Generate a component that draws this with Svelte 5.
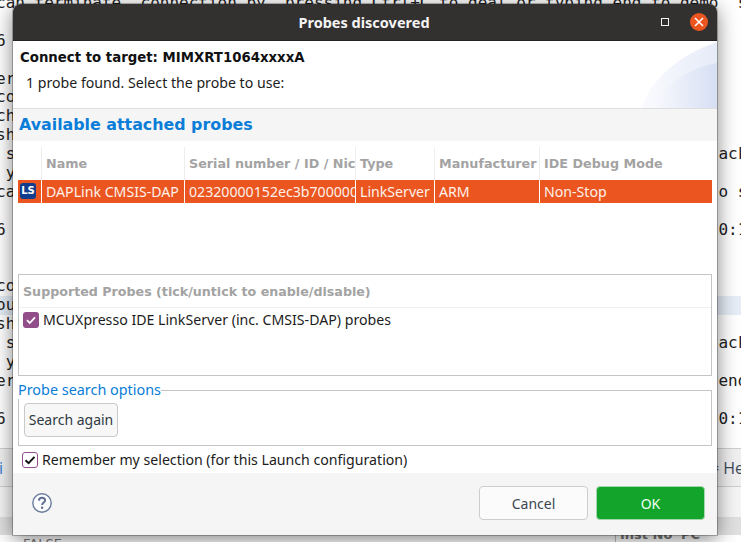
<script lang="ts">
	type Line = { left: string; right: string; tint?: boolean };

	const top = 'can terminate  connection by  pressing Ctrl+C to deal or typing end to demo  s';
	const terminal: Line[] = [
		{ left: top, right: '' },
		{ left: '', right: '' },
		{ left: '6', right: '' },
		{ left: '', right: '' },
		{ left: 'er', right: '' },
		{ left: 'co', right: '' },
		{ left: 'ch', right: '' },
		{ left: 'sh', right: '' },
		{ left: ' s', right: 'ack' },
		{ left: ' y', right: '' },
		{ left: 'ca', right: 'o s' },
		{ left: '', right: '' },
		{ left: '6', right: '0:1' },
		{ left: '', right: '' },
		{ left: '', right: '' },
		{ left: 'co', right: '' },
		{ left: 'ou', right: '', tint: true },
		{ left: 'sh', right: '' },
		{ left: ' s', right: 'ack' },
		{ left: ' y', right: '' },
		{ left: 'er', right: 'end' },
		{ left: '', right: '' },
		{ left: '6', right: '0:1' }
	];

	const columns = [
		{ name: '', value: '', width: 24 },
		{ name: 'Name', value: 'DAPLink CMSIS-DAP', width: 143 },
		{ name: 'Serial number / ID / Nickname', value: '02320000152ec3b70000000000000000', width: 171 },
		{ name: 'Type', value: 'LinkServer', width: 79 },
		{ name: 'Manufacturer', value: 'ARM', width: 105 },
		{ name: 'IDE Debug Mode', value: 'Non-Stop', width: 172 }
	];

	let linkServer = $state(true);
	let remember = $state(true);
</script>

<div class="desktop">
	<div class="terminal">
		{#each terminal as line}
			<div class="term-line" class:tint={line.tint}>{line.left.padEnd(75) + line.right}</div>
		{/each}
	</div>

	<div class="lower-panel">
		<div class="tabs">
			<span class="tab-left">i</span>
			<span class="tab-text">= He</span>
		</div>
		<div class="lower-body"></div>
		<div class="lower-foot">
			<span class="false">FALSE</span>
			<span class="inst">Inst No</span>
			<span class="pc">PC</span>
		</div>
	</div>

	<div class="dialog">
		<header class="titlebar">
			<span class="title">Probes discovered</span>
			<span class="maximize"></span>
			<span class="close">
				<svg width="10" height="10" viewBox="0 0 10 10">
					<path d="M1 1 9 9M9 1 1 9" stroke="#fff" stroke-width="1.5" fill="none" />
				</svg>
			</span>
		</header>

		<section class="banner">
			<svg class="swoosh" width="75" height="66" viewBox="0 0 75 66">
				<defs>
					<linearGradient id="sw" x1="0" x2="1" y1="0" y2="0">
						<stop offset="0" stop-color="#fafbfe" />
						<stop offset="1" stop-color="#e6ebf8" />
					</linearGradient>
					<linearGradient id="sw2" x1="0" x2="1" y1="0" y2="0">
						<stop offset="0" stop-color="#f8f9fd" />
						<stop offset="1" stop-color="#d6dff3" />
					</linearGradient>
				</defs>
				<path d="M0 66C8 38 38 12 75 0V66Z" fill="url(#sw)" />
				<path d="M12 66C24 40 48 26 75 21V66Z" fill="url(#sw2)" />
			</svg>
			<div class="target">Connect to target: MIMXRT1064xxxxA</div>
			<div class="found">1 probe found. Select the probe to use:</div>
		</section>

		<section class="content">
			<h2 class="available">Available attached probes</h2>

			<div class="probes">
				<div class="table-head">
					{#each columns as col}
						<div class="th" style="width: {col.width}px">{col.name}</div>
					{/each}
				</div>
				<div class="table-row">
					{#each columns as col, i}
						<div class="td" style="width: {col.width}px">
							{#if i === 0}
								<span class="ls-icon">LS</span>
							{:else}
								{col.value}
							{/if}
						</div>
					{/each}
				</div>
			</div>

			<div class="supported">
				<div class="supported-head">Supported Probes (tick/untick to enable/disable)</div>
				<label class="supported-item">
					<input type="checkbox" bind:checked={linkServer} />
					<span class="box filled">
						<svg width="14" height="14" viewBox="0 0 14 14">
							<path d="M3 7.2 5.8 10 11 4.4" stroke="#fff" stroke-width="1.8" fill="none" />
						</svg>
					</span>
					MCUXpresso IDE LinkServer (inc. CMSIS-DAP) probes
				</label>
			</div>

			<fieldset class="search">
				<legend>Probe search options</legend>
				<button class="search-btn">Search again</button>
			</fieldset>

			<label class="remember">
				<input type="checkbox" bind:checked={remember} />
				<span class="box outlined">
					<svg width="14" height="14" viewBox="0 0 14 14">
						<path d="M2.5 7.2 5.6 10.2 11.5 3.8" stroke="#111" stroke-width="1.9" fill="none" />
					</svg>
				</span>
				Remember my selection (for this Launch configuration)
			</label>
		</section>

		<footer class="actions">
			<span class="help">
				<svg width="22" height="22" viewBox="0 0 22 22">
					<circle cx="11" cy="11" r="9.2" fill="#fbfcfe" stroke="#6b7c9e" stroke-width="1.4" />
					<path d="M7.9 8.6C8 6.7 9.3 5.8 11 5.8 12.9 5.8 14.1 6.9 14.1 8.4 14.1 10.5 11.1 10.6 11.1 13" stroke="#5f6f8f" stroke-width="1.9" fill="none" />
					<circle cx="11.1" cy="15.8" r="1.2" fill="#5f6f8f" />
				</svg>
			</span>
			<button class="cancel">Cancel</button>
			<button class="ok">OK</button>
		</footer>
	</div>
</div>

<style>
	:global(body) {
		margin: 0;
		background: #fff;
	}

	.desktop {
		position: relative;
		width: 741px;
		height: 542px;
		overflow: hidden;
		background: #fff;
	}

	.terminal {
		margin-top: -6px;
		margin-left: -4px;
		font-family: 'DejaVu Sans Mono', monospace;
		font-size: 16px;
		line-height: 18.9px;
		color: #222;
	}

	.term-line {
		white-space: pre;
		height: 18.9px;
	}

	.term-line.tint {
		background: #e6edf6;
	}

	.lower-panel {
		position: absolute;
		left: 0;
		right: 0;
		top: 448px;
		bottom: 0;
		display: flex;
		flex-direction: column;
		background: #f5f5f5;
		border-top: 1px solid #cfcfcf;
	}

	.tabs {
		height: 37px;
		display: flex;
		justify-content: space-between;
		align-items: center;
		background: #f0f0f0;
		border-bottom: 1px solid #cfcfcf;
		font-family: 'Open Sans', sans-serif;
		font-size: 16px;
		color: #3d4a5a;
	}

	.tab-left {
		color: #1f7fd0;
		margin-left: -1px;
	}

	.tab-text {
		width: 31px;
		white-space: nowrap;
		overflow: hidden;
	}

	.lower-body {
		height: 30px;
		background: #f5f5f5;
	}

	.lower-foot {
		flex: 1;
		position: relative;
		background: #fff linear-gradient(#e0e0e0, #e0e0e0) 0 0 / 100% 18px no-repeat;
		font-family: 'DejaVu Sans', sans-serif;
		font-weight: bold;
		font-size: 13px;
		line-height: 18px;
		color: #777;
	}

	.false {
		position: absolute;
		left: 23px;
		top: 18px;
		font-weight: normal;
	}

	.inst {
		position: absolute;
		left: 615px;
		top: 9px;
		padding-left: 4px;
		border-left: 1px solid #bbb;
	}

	.pc {
		position: absolute;
		left: 681px;
		top: 9px;
	}

	.dialog {
		position: absolute;
		left: 13px;
		top: 4px;
		width: 704px;
		height: 531px;
		display: flex;
		flex-direction: column;
		border-radius: 8px 8px 0 0;
		background: #fff;
		box-shadow: 0 4px 20px rgba(0, 0, 0, 0.5);
		outline: 1px solid rgba(0, 0, 0, 0.25);
		overflow: hidden;
		font-family: 'Noto Sans', sans-serif;
		color: #1c1c1c;
	}

	.titlebar {
		height: 37px;
		flex: none;
		display: flex;
		align-items: center;
		justify-content: center;
		position: relative;
		background: #333030;
		color: #f4f4f4;
		border-bottom: 1px solid #222;
		box-sizing: border-box;
	}

	.title {
		font-weight: bold;
		font-size: 14.5px;
		margin-left: -2px;
	}

	.maximize {
		position: absolute;
		left: 648px;
		top: 14px;
		width: 6px;
		height: 6px;
		border: 1px solid #f4f4f4;
	}

	.close {
		position: absolute;
		left: 677px;
		top: 9px;
		width: 18px;
		height: 18px;
		border-radius: 50%;
		background: #eb5620;
		display: flex;
		align-items: center;
		justify-content: center;
	}

	.banner {
		position: relative;
		height: 68px;
		flex: none;
		box-sizing: border-box;
		padding: 8px 7px 0;
		background: #fff;
		border-bottom: 1px solid #dedede;
	}

	.swoosh {
		position: absolute;
		right: 0;
		bottom: 0;
	}

	.target {
		position: relative;
		font-family: 'DejaVu Sans', sans-serif;
		font-weight: bold;
		font-size: 13.3px;
		line-height: 18px;
		color: #111;
	}

	.found {
		position: relative;
		margin: 6px 0 0 6px;
		font-size: 14.15px;
		line-height: 19px;
	}

	.content {
		flex: 1;
		min-height: 0;
		background: #fff;
		display: flex;
		flex-direction: column;
	}

	.available {
		margin: 0;
		height: 32px;
		box-sizing: border-box;
		padding: 6px 6px 0;
		background: #f5f5f5;
		font-family: 'DejaVu Sans', sans-serif;
		font-size: 15.85px;
		line-height: 20px;
		font-weight: bold;
		color: #0a7dd8;
	}

	.probes {
		height: 133px;
		flex: none;
		padding: 6px 5px 0;
		box-sizing: border-box;
	}

	.table-head,
	.table-row {
		display: flex;
	}

	.table-head {
		height: 33px;
	}

	.th {
		flex: none;
		box-sizing: border-box;
		padding: 9px 4px 0 4px;
		white-space: nowrap;
		overflow: hidden;
		border-right: 1px solid #eeeeee;
		font-family: 'DejaVu Sans', sans-serif;
		font-weight: bold;
		font-size: 12.75px;
		line-height: 16px;
		color: #a3a3a3;
	}

	.th:last-child {
		border-right: 0;
	}

	.table-row {
		height: 23px;
		background: #eb5620;
		color: #fdf1ea;
	}

	.td {
		flex: none;
		box-sizing: border-box;
		padding: 0 4px;
		white-space: nowrap;
		overflow: hidden;
		border-right: 1px solid #fff;
		font-size: 14.15px;
		line-height: 23px;
	}

	.td:first-child {
		padding: 0 2px;
	}

	.td:last-child {
		border-right: 0;
	}

	.ls-icon {
		display: block;
		width: 16px;
		height: 16px;
		margin-top: 3px;
		border-radius: 3px;
		background: #123c8c;
		color: #fff;
		font-family: 'DejaVu Sans', sans-serif;
		font-weight: bold;
		font-size: 10px;
		line-height: 16px;
		text-align: center;
	}

	.supported {
		height: 102px;
		flex: none;
		margin: 0 5px;
		box-sizing: border-box;
		border: 1px solid #c4c4c4;
	}

	.supported-head {
		height: 33px;
		box-sizing: border-box;
		padding: 7px 4px 0;
		border-bottom: 1px solid #f0f0f0;
		font-family: 'DejaVu Sans', sans-serif;
		font-weight: bold;
		font-size: 12.67px;
		line-height: 19px;
		color: #a3a3a3;
	}

	.supported-item {
		display: flex;
		align-items: center;
		gap: 4px;
		padding: 2px 0 0 4px;
		font-size: 14.15px;
		line-height: 19px;
	}

	input[type='checkbox'] {
		display: none;
	}

	.box {
		flex: none;
		width: 16px;
		height: 16px;
		box-sizing: border-box;
		border-radius: 3px;
		display: flex;
		align-items: center;
		justify-content: center;
	}

	.box.filled {
		background: #924d8b;
	}

	.box.outlined {
		background: #fff;
		border: 1px solid #924d8b;
	}

	.search {
		height: 65px;
		flex: none;
		margin: 5px 5px 0;
		padding: 0 0 0 5px;
		box-sizing: border-box;
		border: 1px solid #c4c4c4;
		min-width: 0;
	}

	.search legend {
		margin-left: -6px;
		padding: 0;
		font-size: 14.4px;
		line-height: 18px;
		color: #0a7dd8;
	}

	.search-btn {
		width: 94px;
		height: 34px;
		margin-top: 4px;
		padding: 0 0 2px;
		border: 1px solid #c9c9c9;
		border-radius: 4px;
		background: #f7f7f7;
		font-family: inherit;
		font-size: 14px;
		color: #2f3a44;
	}

	.remember {
		display: flex;
		align-items: center;
		gap: 4px;
		height: 27px;
		padding-left: 9px;
		font-size: 14.15px;
		color: #1c1c1c;
	}

	.actions {
		height: 62px;
		flex: none;
		display: flex;
		align-items: center;
		gap: 8px;
		padding: 0 12px 2px 18px;
		box-sizing: border-box;
		background: #f5f5f5;
	}

	.help {
		display: flex;
		margin-right: auto;
	}

	.cancel,
	.ok {
		width: 109px;
		height: 34px;
		padding: 0;
		border-radius: 4px;
		font-family: inherit;
		font-size: 14px;
	}

	.cancel {
		border: 1px solid #cdcdcd;
		background: #fbfbfb;
		color: #3a4650;
	}

	.ok {
		border: 1px solid #a5d6ad;
		background: #13a52b;
		color: #f2fff2;
	}
</style>
